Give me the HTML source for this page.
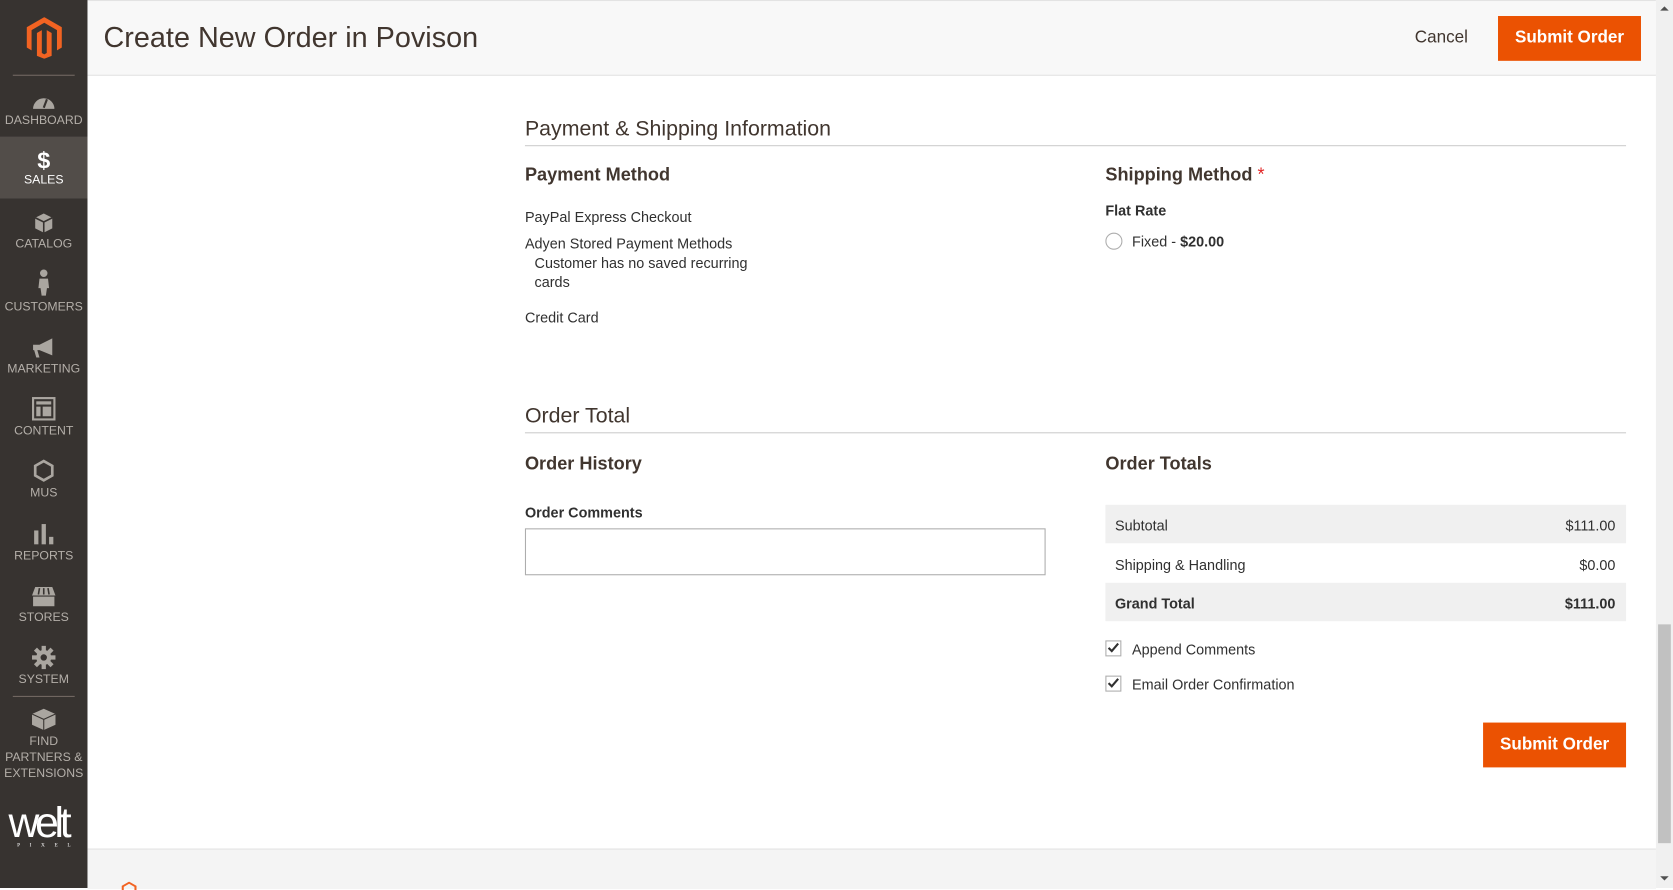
<!DOCTYPE html>
<html><head><meta charset="utf-8"><style>
html,body{margin:0;padding:0;width:1673px;height:888px;overflow:hidden;background:#fff}
#w{position:absolute;left:0;top:0;width:1568px;height:832px;transform:scale(1.06696,1.06731);transform-origin:0 0;font-family:"Liberation Sans",sans-serif;color:#303030}
.a{position:absolute;white-space:nowrap}
#sb{position:absolute;left:0;top:0;width:82px;height:832px;background:#373330}
.it{position:absolute;left:0;width:82px;text-align:center;color:#b4afa9;font-size:11.5px}
.it svg{display:block;margin:0 auto 4px}
.btn{position:absolute;background:#eb5202;color:#fff;font-weight:bold;font-size:16px;text-align:center}
.h2{font-size:20px;color:#41362f}
.h3{font-size:17px;font-weight:bold;color:#41362f}
.t{font-size:13.5px;color:#303030}
.cb{position:absolute;width:13px;height:13px;border:1px solid #adadad;background:#fff}
</style></head><body><div id="w">
<div id="sb">
 <svg class="a" style="left:25px;top:16px" width="33" height="39" viewBox="0 0 33 39"><path d="M16.5 0L0 9.5v19l4.6 2.7V12.2L16.5 5.3l11.9 6.9v19l4.6-2.7v-19z" fill="#f26322"/><path d="M18.8 33.7L16.5 35 14.2 33.7V12.2L9.6 14.9v21.5L16.5 39l6.9-2.6V14.9l-4.6-2.7z" fill="#f26322"/></svg>
 <div class="a" style="left:12px;top:70px;width:58px;height:1px;background:#736963"></div>
 <div class="it" style="top:87px"><svg width="22" height="16" viewBox="0 0 22 16"><path d="M1 15A10 10 0 0 1 21 15z" fill="#aaa6a0"/><path d="M11 14L14 6" stroke="#373330" stroke-width="2"/></svg>DASHBOARD</div>
 <div style="position:absolute;left:0;top:128px;width:82px;height:58px;background:#524d49"></div>
 <div class="it" style="top:140px;color:#fff"><div style="font-size:22px;font-weight:bold;line-height:22px;margin-bottom:1px">$</div>SALES</div>
 <div class="it" style="top:199px"><svg width="20" height="20" viewBox="0 0 20 20"><path d="M10 1L18 5v10l-8 4-8-4V5z" fill="#aaa6a0"/><path d="M2 5l8 4 8-4M10 9v10" stroke="#373330" stroke-width="1.5" fill="none"/></svg>CATALOG</div>
 <div class="it" style="top:252px"><svg width="12" height="26" viewBox="0 0 12 26"><circle cx="6" cy="4" r="3.5" fill="#aaa6a0"/><path d="M2 9h8l1 9h-2l-1 7H4l-1-7H1z" fill="#aaa6a0"/></svg>CUSTOMERS</div>
 <div class="it" style="top:316px"><svg width="22" height="20" viewBox="0 0 22 20"><path d="M1 7h6l12-6v16L7 12H5l2 7H4l-2-7H1z" fill="#aaa6a0"/></svg>MARKETING</div>
 <div class="it" style="top:372px"><svg width="22" height="22" viewBox="0 0 22 22"><rect x="1" y="1" width="20" height="20" fill="none" stroke="#aaa6a0" stroke-width="2"/><rect x="4" y="4" width="14" height="3" fill="#aaa6a0"/><rect x="4" y="9" width="4" height="9" fill="#aaa6a0"/><rect x="10" y="9" width="8" height="9" fill="#aaa6a0"/></svg>CONTENT</div>
 <div class="it" style="top:430px"><svg width="20" height="22" viewBox="0 0 20 22"><path d="M10 2l8 4.5v9L10 20l-8-4.5v-9z" fill="none" stroke="#aaa6a0" stroke-width="2.5"/></svg>MUS</div>
 <div class="it" style="top:489px"><svg width="22" height="22" viewBox="0 0 22 22"><rect x="2" y="8" width="4" height="13" fill="#aaa6a0"/><rect x="9" y="2" width="4" height="19" fill="#aaa6a0"/><rect x="16" y="14" width="4" height="7" fill="#aaa6a0"/></svg>REPORTS</div>
 <div class="it" style="top:549px"><svg width="24" height="20" viewBox="0 0 24 20"><path d="M4 1h16l3 8H1z" fill="#aaa6a0"/><path d="M8 2l-1 6M12 2v6M16 2l1 6" stroke="#373330" stroke-width="1.5"/><rect x="2" y="10" width="20" height="9" fill="#aaa6a0"/></svg>STORES</div>
 <div class="it" style="top:605px"><svg width="22" height="22" viewBox="0 0 22 22"><g fill="#aaa6a0"><circle cx="11" cy="11" r="7"/><rect x="9" y="0" width="4" height="22"/><rect x="0" y="9" width="22" height="4"/><rect x="9" y="0" width="4" height="22" transform="rotate(45 11 11)"/><rect x="9" y="0" width="4" height="22" transform="rotate(-45 11 11)"/></g><circle cx="11" cy="11" r="3" fill="#373330"/></svg>SYSTEM</div>
 <div class="a" style="left:12px;top:652px;width:58px;height:1px;background:#736963"></div>
 <div class="it" style="top:662px;line-height:15px"><svg width="24" height="22" viewBox="0 0 24 22"><path d="M12 2l11 5v10l-11 5-11-5V7z" fill="#aaa6a0"/><path d="M1 7l11 5 11-5M12 12v10" stroke="#373330" stroke-width="1" fill="none"/></svg>FIND<br>PARTNERS &amp;<br>EXTENSIONS</div>
 <div class="a" style="left:8px;top:748px;color:#fff;font-size:40px;letter-spacing:-4px;line-height:46px">welt</div>
 <div class="a" style="left:16px;top:790px;color:#fff;font-size:5px;letter-spacing:9px;font-family:'Liberation Serif',serif">PIXEL</div>
</div>
<div class="a" style="left:82px;top:0;width:1470px;height:71px;background:#f8f8f8;border-top:1px solid #e3e3e3;border-bottom:1px solid #e3e3e3;box-sizing:border-box"></div>
<div class="a" style="left:97px;top:20px;font-size:27px;color:#41362f">Create New Order in Povison</div>
<div class="a" style="left:1326px;top:27px;font-size:16px;color:#41362f">Cancel</div>
<div class="btn" style="left:1404px;top:15px;width:134px;height:42px;line-height:42px">Submit Order</div>
<div class="a" style="left:1552px;top:0;width:16px;height:832px;background:#f0f0f0"></div>
<div class="a" style="left:1554px;top:585px;width:12px;height:205px;background:#c1c1c1"></div>
<div class="a" style="left:1556px;top:6px;width:0;height:0;border:4px solid transparent;border-bottom-color:#505050;border-top:0"></div>
<div class="a" style="left:1556px;top:821px;width:0;height:0;border:4px solid transparent;border-top-color:#505050;border-bottom:0"></div>

<div class="a h2" style="left:492px;top:110px">Payment &amp; Shipping Information</div>
<div class="a" style="left:492px;top:136px;width:1032px;height:1px;background:#cccccc"></div>
<div class="a h3" style="left:492px;top:154px">Payment Method</div>
<div class="a t" style="left:492px;top:196px">PayPal Express Checkout</div>
<div class="a t" style="left:492px;top:221px">Adyen Stored Payment Methods</div>
<div class="a t" style="left:501px;top:239px">Customer has no saved recurring</div>
<div class="a t" style="left:501px;top:257px">cards</div>
<div class="a t" style="left:492px;top:290px">Credit Card</div>
<div class="a h3" style="left:1036px;top:154px">Shipping Method<span style="color:#e22626;font-weight:normal"> *</span></div>
<div class="a t" style="left:1036px;top:190px;font-weight:bold">Flat Rate</div>
<div class="a" style="left:1036px;top:218px;width:14px;height:14px;border:1px solid #adadad;border-radius:50%"></div>
<div class="a t" style="left:1061px;top:219px">Fixed - <b>$20.00</b></div>

<div class="a h2" style="left:492px;top:379px">Order Total</div>
<div class="a" style="left:492px;top:405px;width:1032px;height:1px;background:#cccccc"></div>
<div class="a h3" style="left:492px;top:425px">Order History</div>
<div class="a t" style="left:492px;top:473px;font-weight:bold">Order Comments</div>
<div class="a" style="left:492px;top:495px;width:488px;height:44px;border:1px solid #adadad;box-sizing:border-box"></div>
<div class="a h3" style="left:1036px;top:425px">Order Totals</div>
<div class="a" style="left:1036px;top:473px;width:488px;height:36px;background:#f0f0f0"></div>
<div class="a" style="left:1036px;top:546px;width:488px;height:36px;background:#f0f0f0"></div>
<div class="a t" style="left:1045px;top:485px">Subtotal</div>
<div class="a t" style="right:54px;top:485px">$111.00</div>
<div class="a t" style="left:1045px;top:522px">Shipping &amp; Handling</div>
<div class="a t" style="right:54px;top:522px">$0.00</div>
<div class="a t" style="left:1045px;top:558px;font-weight:bold">Grand Total</div>
<div class="a t" style="right:54px;top:558px;font-weight:bold">$111.00</div>
<div class="cb" style="left:1036px;top:600px"><svg width="13" height="13" viewBox="0 0 13 13"><path d="M2 6l3 3 6-7" stroke="#303030" stroke-width="2" fill="none"/></svg></div>
<div class="a t" style="left:1061px;top:601px">Append Comments</div>
<div class="cb" style="left:1036px;top:633px"><svg width="13" height="13" viewBox="0 0 13 13"><path d="M2 6l3 3 6-7" stroke="#303030" stroke-width="2" fill="none"/></svg></div>
<div class="a t" style="left:1061px;top:634px">Email Order Confirmation</div>
<div class="btn" style="left:1390px;top:677px;width:134px;height:42px;line-height:42px">Submit Order</div>

<div class="a" style="left:82px;top:795px;width:1470px;height:37px;background:#f4f4f4;border-top:1px solid #e3e3e3"></div>
<svg class="a" style="left:114px;top:826px" width="14" height="8" viewBox="0 0 14 8"><path d="M7 0L0 4v4h2V5l5-3 5 3v3h2V4z" fill="#f26322"/></svg>
</div></body></html>
